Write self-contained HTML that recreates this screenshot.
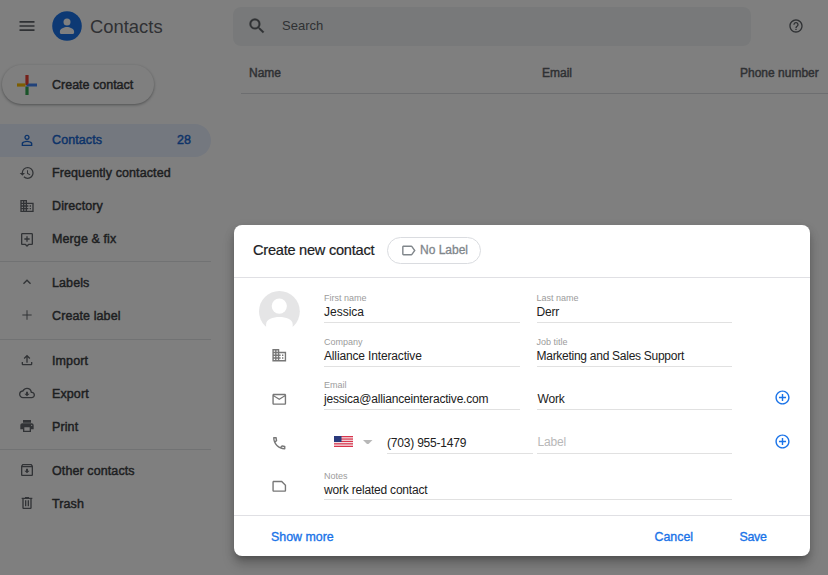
<!DOCTYPE html>
<html lang="en">
<head>
<meta charset="utf-8">
<title>Contacts</title>
<style>
*{box-sizing:border-box;margin:0;padding:0}
html,body{width:828px;height:575px;overflow:hidden;background:#fff;font-family:"Liberation Sans",Arial,sans-serif;}
#app{position:absolute;left:0;top:0;width:828px;height:575px;background:#fff;overflow:hidden}
.abs{position:absolute}
.t{position:absolute;white-space:nowrap;line-height:1}
/* header */
#title{left:90px;top:18px;font-size:18.400px;color:#5f6368}
#search{left:233px;top:6.500px;width:518px;height:39.500px;border-radius:8px;background:#f1f3f4}
#search .t{left:49px;top:12.500px;font-size:13px;color:#5f6368}
/* create button */
#create{left:2px;top:65px;width:152px;height:39px;border-radius:20px;background:#fff;box-shadow:0 1px 2px 0 rgba(60,64,67,.30),0 1px 3px 1px rgba(60,64,67,.15)}
#create .t{left:50px;top:14.300px;font-size:12.500px;letter-spacing:0;-webkit-text-stroke:.45px #3c4043;color:#3c4043}
/* nav */
.nav{position:absolute;left:0;width:211px;height:32px}
.nav .t{left:52px;top:10px;font-size:12.500px;letter-spacing:.1px;-webkit-text-stroke:.45px #3c4043;color:#3c4043}
.nav svg{position:absolute;left:19px;top:8px;width:16px;height:16px;fill:#63676c}
.nav.sel{background:#e8f0fe;border-radius:0 17px 17px 0;height:33px}
.nav.sel .t{color:#1967d2;-webkit-text-stroke-color:#1967d2}
.nav.sel svg{fill:#1967d2}
.hr{position:absolute;left:0;width:211px;height:1px;background:#e2e4e7}
/* table head */
.th{font-size:12px;-webkit-text-stroke:.45px #5f6368;color:#5f6368;top:66.700px}
/* scrim */
#scrim{left:0;top:0;width:828px;height:575px;background:rgba(0,0,0,.5)}
/* modal */
#modal{left:234px;top:225px;width:576px;height:331px;border-radius:8px;background:#fff;box-shadow:0 9px 12px 1px rgba(0,0,0,.15),0 3px 10px 1px rgba(0,0,0,.10),0 5px 6px -3px rgba(0,0,0,.22)}
#modal .head{left:19px;top:17.500px;font-size:14.600px;letter-spacing:-.25px;-webkit-text-stroke:.2px #202124;color:#202124}
#chip{left:153px;top:12.400px;width:94.200px;height:26.400px;border:1px solid #dadce0;border-radius:14px}
#chip .t{left:32px;top:6px;font-size:12px;-webkit-text-stroke:.3px #80868b;color:#80868b}
.mhr{position:absolute;left:0;width:576px;height:1px;background:#e0e0e4}
.lbl{font-size:9px;color:#9c9c9c}
.val{font-size:12px;letter-spacing:-.2px;color:#212121}
.ul{position:absolute;height:1px;background:#e1e1e1}
.btn{font-size:12.400px;-webkit-text-stroke:.35px #1a73e8;color:#1a73e8}
.ic{position:absolute;fill:#777}
</style>
</head>
<body>
<div id="app">
  <!-- header -->
  <svg class="abs" style="left:17.200px;top:16.200px" width="20" height="20" viewBox="0 0 24 24" fill="#5f6368"><path d="M3 18h18v-2H3v2zm0-5h18v-2H3v2zm0-7v2h18V6H3z"/></svg>
  <svg class="abs" style="left:51.700px;top:11.100px" width="30" height="30" viewBox="0 0 30 30"><circle cx="15" cy="15" r="14.800" fill="#1a73e8"/><circle cx="15" cy="10.900" r="3.500" fill="#fff"/><path d="M7.900 20.600c0-3.100 4.600-4.600 7.100-4.600s7.100 1.500 7.100 4.600v1.200c0 .7-.5 1.200-1.200 1.200H9.100c-.7 0-1.200-.5-1.200-1.200z" fill="#fff"/></svg>
  <div class="t" id="title">Contacts</div>
  <div class="abs" id="search">
    <svg class="abs" style="left:13.500px;top:9.800px" width="20" height="20" viewBox="0 0 24 24" fill="#5f6368" stroke="#5f6368" stroke-width=".4"><path d="M15.500 14h-.79l-.28-.27A6.471 6.471 0 0 0 16 9.500 6.500 6.500 0 1 0 9.500 16c1.610 0 3.090-.59 4.230-1.570l.27.28v.79l5 4.990L20.490 19l-4.990-5zm-6 0C7.010 14 5 11.990 5 9.500S7.010 5 9.500 5 14 7.010 14 9.500 11.990 14 9.500 14z"/></svg>
    <div class="t">Search</div>
  </div>
  <svg class="abs" style="left:788px;top:18px" width="16" height="16" viewBox="0 0 24 24" fill="#5f6368"><path d="M11 18h2v-2h-2v2zm1-16C6.480 2 2 6.480 2 12s4.480 10 10 10 10-4.480 10-10S17.520 2 12 2zm0 18c-4.410 0-8-3.590-8-8s3.590-8 8-8 8 3.590 8 8-3.590 8-8 8zm0-14c-2.210 0-4 1.790-4 4h2c0-1.100.9-2 2-2s2 .9 2 2c0 2-3 1.750-3 5h2c0-2.250 3-2.500 3-5 0-2.210-1.790-4-4-4z"/></svg>

  <!-- create contact -->
  <div class="abs" id="create">
    <svg class="abs" style="left:15.300px;top:9.800px" width="20" height="20" viewBox="0 0 20 20"><rect x="8.400" y="0" width="3.200" height="10" fill="#ea4335"/><rect x="8.400" y="11.600" width="3.200" height="8.400" fill="#34a853"/><rect x="0" y="8.400" width="8.400" height="3.200" fill="#fbbc04"/><path d="M8.400 11.600h11.600v-3.200h-8.400z" fill="#4285f4"/></svg>
    <div class="t">Create contact</div>
  </div>

  <!-- nav -->
  <div class="nav sel" style="top:124px"><svg viewBox="0 0 24 24"><path d="M12 6c1.100 0 2 .9 2 2s-.9 2-2 2-2-.9-2-2 .9-2 2-2m0-2C9.790 4 8 5.790 8 8s1.790 4 4 4 4-1.790 4-4-1.790-4-4-4zm6 13.500V19H6v-1.500c0-.86 3.130-2.500 6-2.500s6 1.640 6 2.500zM12 13c-2.670 0-8 1.340-8 4v4h16v-4c0-2.660-5.330-4-8-4z"/></svg><div class="t">Contacts</div><div class="t" style="left:177px">28</div></div>
  <div class="nav" style="top:157px"><svg viewBox="0 0 24 24"><path d="M13 3a9 9 0 0 0-9 9H1l3.890 3.890.07.14L9 12H6c0-3.870 3.130-7 7-7s7 3.130 7 7-3.130 7-7 7c-1.930 0-3.680-.79-4.940-2.060l-1.420 1.420A8.954 8.954 0 0 0 13 21a9 9 0 0 0 0-18zm-1 5v5l4.250 2.520.77-1.280-3.520-2.090V8H12z"/></svg><div class="t">Frequently contacted</div></div>
  <div class="nav" style="top:190px"><svg viewBox="0 0 24 24"><path d="M12 7V3H2v18h20V7H12zM6 19H4v-2h2v2zm0-4H4v-2h2v2zm0-4H4V9h2v2zm0-4H4V5h2v2zm4 12H8v-2h2v2zm0-4H8v-2h2v2zm0-4H8V9h2v2zm0-4H8V5h2v2zm10 12h-8v-2h2v-2h-2v-2h2v-2h-2V9h8v10zm-2-8h-2v2h2v-2zm0 4h-2v2h2v-2z"/></svg><div class="t">Directory</div></div>
  <div class="nav" style="top:223px"><svg viewBox="0 0 24 24"><path d="M19 3H5c-1.100 0-2 .9-2 2v14c0 1.100.9 2 2 2h4l3 3 3-3h4c1.100 0 2-.9 2-2V5c0-1.100-.9-2-2-2zm0 16h-4.830L12 21.170 9.830 19H5V5h14v14zm-8-3h2v-3h3v-2h-3V8h-2v3H8v2h3v3z"/></svg><div class="t">Merge &amp; fix</div></div>
  <div class="hr" style="top:261px"></div>
  <div class="nav" style="top:266.200px"><svg viewBox="0 0 24 24"><path d="M7.410 15.410L12 10.830l4.590 4.580L18 14l-6-6-6 6z"/></svg><div class="t" style="top:11px">Labels</div></div>
  <div class="nav" style="top:299.200px"><svg viewBox="0 0 24 24"><path d="M19 12.750h-6.250V19h-1.500v-6.250H5v-1.500h6.250V5h1.500v6.250H19v1.500z"/></svg><div class="t" style="top:11px">Create label</div></div>
  <div class="hr" style="top:339px"></div>
  <div class="nav" style="top:344px"><svg viewBox="0 0 24 24"><path d="M18 15v3H6v-3H4v3c0 1.100.9 2 2 2h12c1.100 0 2-.9 2-2v-3h-2zM7 9l1.410 1.410L11 7.830V16h2V7.830l2.590 2.580L17 9l-5-5-5 5z"/></svg><div class="t" style="top:10.7px">Import</div></div>
  <div class="nav" style="top:377px"><svg viewBox="0 0 24 24"><path d="M19.350 10.040A7.490 7.490 0 0 0 12 4C9.110 4 6.600 5.640 5.350 8.040A5.994 5.994 0 0 0 0 14c0 3.310 2.690 6 6 6h13c2.760 0 5-2.240 5-5 0-2.640-2.050-4.780-4.650-4.960zM19 18H6c-2.210 0-4-1.790-4-4 0-2.050 1.530-3.760 3.560-3.970l1.070-.11.5-.95A5.469 5.469 0 0 1 12 6c2.620 0 4.880 1.860 5.390 4.430l.3 1.500 1.530.11A2.980 2.980 0 0 1 22 15c0 1.650-1.350 3-3 3zm-5.550-8h-2.900v3H8l4 4 4-4h-2.550z"/></svg><div class="t" style="top:10.8px">Export</div></div>
  <div class="nav" style="top:410px"><svg viewBox="0 0 24 24"><path d="M19 8H5c-1.660 0-3 1.340-3 3v6h4v4h12v-4h4v-6c0-1.660-1.340-3-3-3zm-3 11H8v-5h8v5zm3-7c-.55 0-1-.45-1-1s.45-1 1-1 1 .45 1 1-.45 1-1 1zm-1-9H6v4h12V3z"/></svg><div class="t" style="top:10.8px">Print</div></div>
  <div class="hr" style="top:449px"></div>
  <div class="nav" style="top:454px"><svg viewBox="0 0 24 24"><path d="M20.540 5.230l-1.390-1.680C18.880 3.210 18.470 3 18 3H6c-.47 0-.88.21-1.160.55L3.460 5.230C3.170 5.570 3 6.020 3 6.500V19c0 1.100.9 2 2 2h14c1.100 0 2-.9 2-2V6.500c0-.48-.17-.93-.46-1.270zM6.240 5h11.520l.81.970H5.440l.8-.97zM5 19V8h14v11H5zm8.450-9h-2.900v3H8l4 4 4-4h-2.550v-3z"/></svg><div class="t" style="top:11px">Other contacts</div></div>
  <div class="nav" style="top:487px"><svg viewBox="0 0 24 24"><path d="M15 4V3H9v1H4v2h1v13c0 1.100.9 2 2 2h10c1.100 0 2-.9 2-2V6h1V4h-5zm2 15H7V6h10v13zM9 8h2v9H9zm4 0h2v9h-2z"/></svg><div class="t" style="top:11px">Trash</div></div>

  <!-- table header -->
  <div class="t th" style="left:249px">Name</div>
  <div class="t th" style="left:542px">Email</div>
  <div class="t th" style="left:740px">Phone number</div>
  <div class="abs" style="left:241px;top:93px;width:587px;height:1px;background:#dadce0"></div>

  <div class="abs" id="scrim"></div>

  <!-- modal -->
  <div class="abs" id="modal">
    <div class="t head">Create new contact</div>
    <div class="abs" id="chip">
      <svg class="abs" style="left:11.600px;top:3.900px" width="17" height="17" viewBox="0 0 24 24" fill="#80868b"><path d="M17.630 5.840C17.270 5.330 16.670 5 16 5L5 5.010C3.900 5.010 3 5.900 3 7v10c0 1.100.9 1.990 2 1.990L16 19c.67 0 1.270-.33 1.630-.84L22 12l-4.370-6.160zM16 17H5V7h11l3.550 5L16 17z"/></svg>
      <div class="t">No Label</div>
    </div>
    <div class="mhr" style="top:52px"></div>

    <!-- avatar -->
    <svg class="abs" style="left:24.800px;top:66px" width="40.800" height="40.800" viewBox="0 0 40.800 40.800"><circle cx="20.400" cy="20.400" r="20.400" fill="#e5e5e6"/><g fill="#fff"><circle cx="20.300" cy="15.100" r="7.600"/><path d="M7.100 42V33.500C7.100 28.200 14 26.100 20.400 26.100S33.700 28.200 33.700 33.500V42z"/></g></svg>

    <div class="t lbl" style="left:90px;top:69px">First name</div>
    <div class="t val" style="left:90px;top:81px;letter-spacing:0">Jessica</div>
    <div class="ul" style="left:90px;top:97px;width:196px"></div>
    <div class="t lbl" style="left:302.500px;top:69px">Last name</div>
    <div class="t val" style="left:302.500px;top:81px">Derr</div>
    <div class="ul" style="left:302.500px;top:97px;width:195px"></div>

    <svg class="ic" style="left:36.650px;top:121.900px" width="16.500" height="16.500" viewBox="0 0 24 24"><path d="M12 7V3H2v18h20V7H12zM6 19H4v-2h2v2zm0-4H4v-2h2v2zm0-4H4V9h2v2zm0-4H4V5h2v2zm4 12H8v-2h2v2zm0-4H8v-2h2v2zm0-4H8V9h2v2zm0-4H8V5h2v2zm10 12h-8v-2h2v-2h-2v-2h2v-2h-2V9h8v10zm-2-8h-2v2h2v-2zm0 4h-2v2h2v-2z"/></svg>
    <div class="t lbl" style="left:90px;top:113px">Company</div>
    <div class="t val" style="left:90px;top:125px;letter-spacing:-.15px">Alliance Interactive</div>
    <div class="ul" style="left:90px;top:141px;width:196px"></div>
    <div class="t lbl" style="left:302.500px;top:113px">Job title</div>
    <div class="t val" style="left:302.500px;top:125px;letter-spacing:-.27px">Marketing and Sales Support</div>
    <div class="ul" style="left:302.500px;top:141px;width:195px"></div>

    <svg class="ic" style="left:36.650px;top:165.500px" width="16.500" height="16.500" viewBox="0 0 24 24"><path d="M22 6c0-1.100-.9-2-2-2H4c-1.100 0-2 .9-2 2v12c0 1.100.9 2 2 2h16c1.100 0 2-.9 2-2V6zm-2 0l-8 5-8-5h16zm0 12H4V8l8 5 8-5v10z"/></svg>
    <div class="t lbl" style="left:90px;top:156px">Email</div>
    <div class="t val" style="left:90px;top:168px;letter-spacing:-.19px">jessica@allianceinteractive.com</div>
    <div class="ul" style="left:90px;top:184px;width:196px"></div>
    <div class="t val" style="left:303.500px;top:167.700px">Work</div>
    <div class="ul" style="left:302.500px;top:184px;width:195px"></div>
    <svg class="abs" style="left:539.500px;top:164.300px" width="17" height="17" viewBox="0 0 24 24" fill="#1a73e8"><path d="M13 7h-2v4H7v2h4v4h2v-4h4v-2h-4V7zm-1-5C6.480 2 2 6.480 2 12s4.480 10 10 10 10-4.480 10-10S17.520 2 12 2zm0 18c-4.410 0-8-3.590-8-8s3.590-8 8-8 8 3.590 8 8-3.590 8-8 8z"/></svg>

    <svg class="ic" style="left:37px;top:209.500px" width="16.500" height="16.500" viewBox="0 0 24 24"><path d="M6.540 5c.06.89.21 1.760.45 2.590l-1.200 1.200c-.41-1.200-.67-2.470-.76-3.790h1.510m9.860 12.020c.85.240 1.720.39 2.600.45v1.490c-1.320-.09-2.590-.35-3.800-.75l1.200-1.190M7.500 3H4c-.55 0-1 .45-1 1 0 9.390 7.610 17 17 17 .55 0 1-.45 1-1v-3.490c0-.55-.45-1-1-1-1.240 0-2.450-.2-3.570-.57a.840.840 0 0 0-.31-.05c-.26 0-.51.100-.71.290l-2.200 2.200a15.149 15.149 0 0 1-6.590-6.590l2.200-2.200c.28-.28.360-.67.250-1.020A11.360 11.360 0 0 1 8.500 4c0-.55-.45-1-1-1z"/></svg>
    <svg class="abs" style="left:100px;top:211px" width="19" height="11" viewBox="0 0 19 11"><rect width="19" height="11" fill="#f5f5f5"/><g fill="#d9344c"><rect y="0" width="19" height="1.300"/><rect y="2.400" width="19" height="1.300"/><rect y="4.800" width="19" height="1.300"/><rect y="7.200" width="19" height="1.300"/><rect y="9.700" width="19" height="1.300"/></g><rect width="7.500" height="6" fill="#2a3a7c"/></svg>
    <svg class="abs" style="left:129.200px;top:214.600px" width="9.500" height="4.800" viewBox="0 0 10 5" fill="#b8b8b8"><path d="M0 0l5 5 5-5z"/></svg>
    <div class="t val" style="left:153px;top:212px">(703) 955-1479</div>
    <div class="ul" style="left:152.600px;top:228px;width:146.600px"></div>
    <div class="t val" style="left:303.500px;top:211px;color:#b8b8b8">Label</div>
    <div class="ul" style="left:302.500px;top:228px;width:195px"></div>
    <svg class="abs" style="left:539.500px;top:208.100px" width="17" height="17" viewBox="0 0 24 24" fill="#1a73e8"><path d="M13 7h-2v4H7v2h4v4h2v-4h4v-2h-4V7zm-1-5C6.480 2 2 6.480 2 12s4.480 10 10 10 10-4.480 10-10S17.520 2 12 2zm0 18c-4.410 0-8-3.590-8-8s3.590-8 8-8 8 3.590 8 8-3.590 8-8 8z"/></svg>

    <svg class="ic" style="left:36.800px;top:253.200px" width="16.500" height="16.500" viewBox="0 0 24 24"><path d="M16 4H4c-1.100 0-2 .9-2 2v12.010c0 1.100.9 1.990 2 1.990h16c1.100 0 2-.9 2-2v-8l-6-6zM4 18.010V6h11.200l4.800 4.800v7.210H4z"/></svg>
    <div class="t lbl" style="left:90px;top:247px">Notes</div>
    <div class="t val" style="left:90px;top:259px">work related contact</div>
    <div class="ul" style="left:90px;top:274px;width:407.500px"></div>

    <div class="mhr" style="top:290px"></div>
    <div class="t btn" style="left:37px;top:305.500px">Show more</div>
    <div class="t btn" style="left:420.500px;top:305.500px">Cancel</div>
    <div class="t btn" style="left:505.500px;top:305.500px;letter-spacing:-.3px">Save</div>
  </div>
</div>
</body>
</html>
